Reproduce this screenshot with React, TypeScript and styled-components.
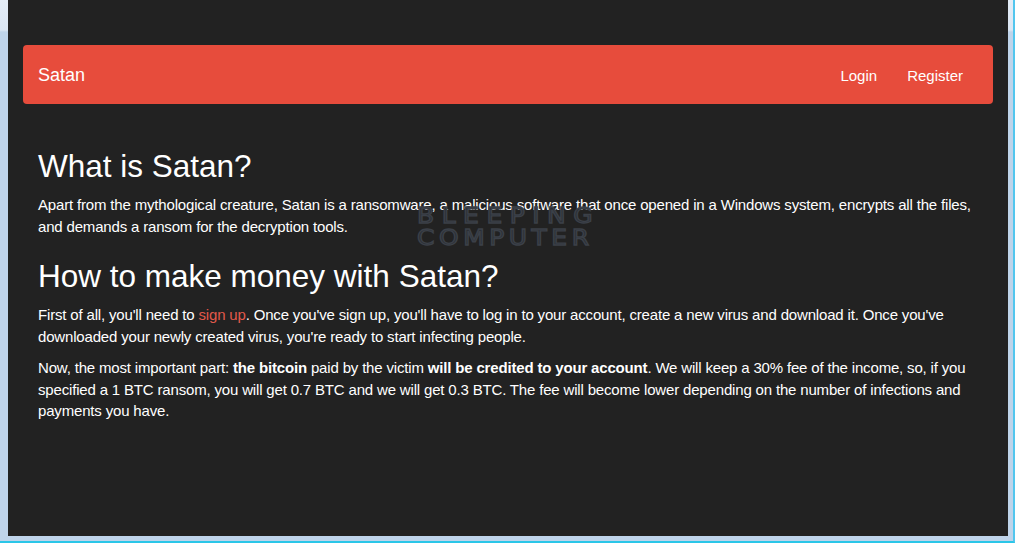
import React from "react";
import styled, { createGlobalStyle } from "styled-components";

const Global = createGlobalStyle`
  html, body { margin: 0; padding: 0; }
  body { background: #bfd4ea; font-family: "Liberation Sans", Arial, sans-serif; }
  * { box-sizing: border-box; }
`;

const Frame = styled.div`
  width: 1015px;
  height: 543px;
  display: flex;
  padding: 0 5px 5px 8px;
  background: linear-gradient(to bottom, #e4ecf6 0px, #dbe6f3 30px, #bfd4ea 32px, #bfd4ea 100%);
  border-right: 2px solid #52c6ee;
  border-bottom: 2px solid #2ac6e8;
`;

const Page = styled.div`
  flex: 1;
  background: #222222;
  color: #ffffff;
  font-size: 15px;
  line-height: 1.42857;
  letter-spacing: -0.17px;
  padding-top: 45px;
  position: relative;
  overflow: hidden;
`;

const Container = styled.div`
  width: 970px;
  margin: 0 auto;
`;

const Navbar = styled.nav`
  height: 59px;
  background: #e74c3c;
  border-radius: 4px;
  display: flex;
  align-items: center;
  justify-content: space-between;
  padding: 0 15px 0 0;
  margin-bottom: 21px;
`;

const Brand = styled.a`
  font-size: 18px;
  letter-spacing: 0;
  color: #ffffff;
  padding: 0 15px;
  text-decoration: none;
  margin-top: 2px;
`;

const NavList = styled.ul`
  list-style: none;
  margin: 0;
  padding: 0;
  display: flex;
`;

const NavLink = styled.a`
  display: block;
  padding: 0 15px;
  color: #ffffff;
  font-size: 15px;
  letter-spacing: 0;
  text-decoration: none;
  margin-top: 3px;
`;

const Content = styled.main`
  display: flow-root;
  padding: 0 15px;
`;

const Heading = styled.h1<{ $top?: number }>`
  font-size: 31.5px;
  font-weight: 400;
  letter-spacing: 0;
  line-height: 1.1;
  margin: ${(p) => p.$top ?? 21}px 0 10.5px;
`;

const Para = styled.p`
  margin: 0 0 10.5px;
`;

const Link = styled.a`
  color: #e2594b;
  text-decoration: none;
`;

const Watermark = styled.div`
  position: absolute;
  left: 409px;
  top: 207px;
  font-family: "DejaVu Sans", sans-serif;
  font-weight: 400;
  font-size: 25px;
  line-height: 22px;
  color: #2b2f35;
  -webkit-text-stroke: 1.5px #3b4048;
  pointer-events: none;
  user-select: none;
`;

const WaterLine = styled.div<{ $spacing: number }>`
  letter-spacing: ${(p) => p.$spacing}px;
  transform: scaleY(0.85);
  transform-origin: left top;
`;

export default function App() {
  return (
    <>
      <Global />
      <Frame>
        <Page>
          <Container>
            <Navbar>
              <Brand href="#">Satan</Brand>
              <NavList>
                <li><NavLink href="#">Login</NavLink></li>
                <li><NavLink href="#">Register</NavLink></li>
              </NavList>
            </Navbar>
            <Content>
              <Heading $top={24}>What is Satan?</Heading>
              <Para>
                Apart from the mythological creature, Satan is a ransomware, a malicious software that once opened in a Windows system, encrypts all the files, and demands a ransom for the decryption tools.
              </Para>
              <Heading as="h2" $top={22}>How to make money with Satan?</Heading>
              <Para>
                First of all, you'll need to <Link href="#">sign up</Link>. Once you've sign up, you'll have to log in to your account, create a new virus and download it. Once you've downloaded your newly created virus, you're ready to start infecting people.
              </Para>
              <Para>
                Now, the most important part: <b>the bitcoin</b> paid by the victim <b>will be credited to your account</b>. We will keep a 30% fee of the income, so, if you specified a 1 BTC ransom, you will get 0.7 BTC and we will get 0.3 BTC. The fee will become lower depending on the number of infections and payments you have.
              </Para>
            </Content>
          </Container>
          <Watermark aria-hidden="true">
            <WaterLine $spacing={7.5}>BLEEPING</WaterLine>
            <WaterLine $spacing={4.5}>COMPUTER</WaterLine>
          </Watermark>
        </Page>
      </Frame>
    </>
  );
}
